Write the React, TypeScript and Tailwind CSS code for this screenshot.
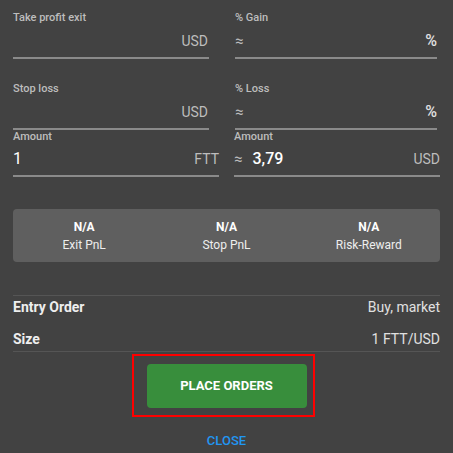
import React from 'react';

const font = { fontFamily: 'Roboto, "Liberation Sans", sans-serif' };

function Field({ label, unit, prefix, width }: { label: string; unit: string; prefix?: boolean; width: string }) {
    return (
        <div className={`${width} flex flex-col`}>
            <div className="h-[14px] text-[11px] font-medium leading-[14px] text-[#bdbdbd]">{label}</div>
            <div className="h-[32px] flex items-center justify-between text-[#bdbdbd]">
                <span className="text-[15px]">{prefix ? '≈' : ''}</span>
                {prefix ? (
                    <span className="text-[16px] font-medium text-[#e0e0e0]">{unit}</span>
                ) : (
                    <span className="text-[14px] pr-[1px]">{unit}</span>
                )}
            </div>
            <div className="h-[2px] bg-[#8a8a8a]" />
        </div>
    );
}

function Stat({ value, label }: { value: string; label: string }) {
    return (
        <div className="flex flex-col items-center">
            <div className="text-[12px] leading-[16px] font-bold text-white">{value}</div>
            <div className="text-[12px] leading-[16px] text-[#eeeeee] mt-[2px]">{label}</div>
        </div>
    );
}

export default function App() {
    return (
        <div className="w-[453px] h-[453px] bg-[#424242] px-[13px] overflow-hidden" style={font}>
            {/* Exit / stop fields */}
            <div className="flex justify-between pt-[11px] pr-[3px]">
                <Field label="Take profit exit" unit="USD" width="w-[196px]" />
                <Field label="% Gain" unit="%" prefix width="w-[202px]" />
            </div>
            <div className="flex justify-between pt-[23px] pr-[3px]">
                <Field label="Stop loss" unit="USD" width="w-[196px]" />
                <Field label="% Loss" unit="%" prefix width="w-[202px]" />
            </div>

            {/* Amount */}
            <div className="grid grid-cols-2 gap-[15px] pt-[1px]">
                <div className="flex flex-col">
                    <div className="h-[12px] text-[11px] font-medium leading-[12px] text-[#bdbdbd]">Amount</div>
                    <div className="h-[32px] flex items-center justify-between">
                        <span className="text-[16px] text-white">1</span>
                        <span className="text-[14px] text-[#bdbdbd]">FTT</span>
                    </div>
                    <div className="h-[2px] bg-[#8a8a8a]" />
                </div>
                <div className="flex flex-col">
                    <div className="h-[12px] text-[11px] font-medium leading-[12px] text-[#bdbdbd]">Amount</div>
                    <div className="h-[32px] flex items-center justify-between">
                        <span className="flex items-center gap-[10px]">
                            <span className="text-[15px] text-[#bdbdbd]">≈</span>
                            <span className="text-[16px] font-medium text-white">3,79</span>
                        </span>
                        <span className="text-[14px] text-[#bdbdbd]">USD</span>
                    </div>
                    <div className="h-[2px] bg-[#8a8a8a]" />
                </div>
            </div>

            {/* PnL summary */}
            <div className="mt-[32px] h-[53px] rounded-[4px] bg-[#5f5f5f] grid grid-cols-3 items-center">
                <Stat value="N/A" label="Exit PnL" />
                <Stat value="N/A" label="Stop PnL" />
                <Stat value="N/A" label="Risk-Reward" />
            </div>

            {/* Order info */}
            <div className="mt-[33px] border-t border-[#555555]">
                <div className="h-[22px] flex items-center justify-between text-[14px]">
                    <span className="font-bold text-[#eeeeee]">Entry Order</span>
                    <span className="text-[#e0e0e0]">Buy, market</span>
                </div>
                <div className="h-[32px] pt-[10px] flex items-center justify-between text-[14px]">
                    <span className="font-bold text-[#eeeeee]">Size</span>
                    <span className="text-[#e0e0e0]">1 FTT/USD</span>
                </div>
            </div>
            <div className="mt-[1px] border-t border-[#555555]" />

            {/* Actions */}
            <div className="flex justify-center pt-[2px]">
                <div className="ml-[-7px] w-[183px] h-[63px] border-2 border-[#ff0000] pl-[13px] pt-[8px]">
                    <button className="w-[160px] h-[44px] rounded-[4px] bg-[#388e3c] text-white text-[13px] font-bold">
                        PLACE ORDERS
                    </button>
                </div>
            </div>
            <div className="flex justify-center pt-[14px]">
                <button className="text-[13px] font-medium text-[#2196f3]">CLOSE</button>
            </div>
        </div>
    );
}
